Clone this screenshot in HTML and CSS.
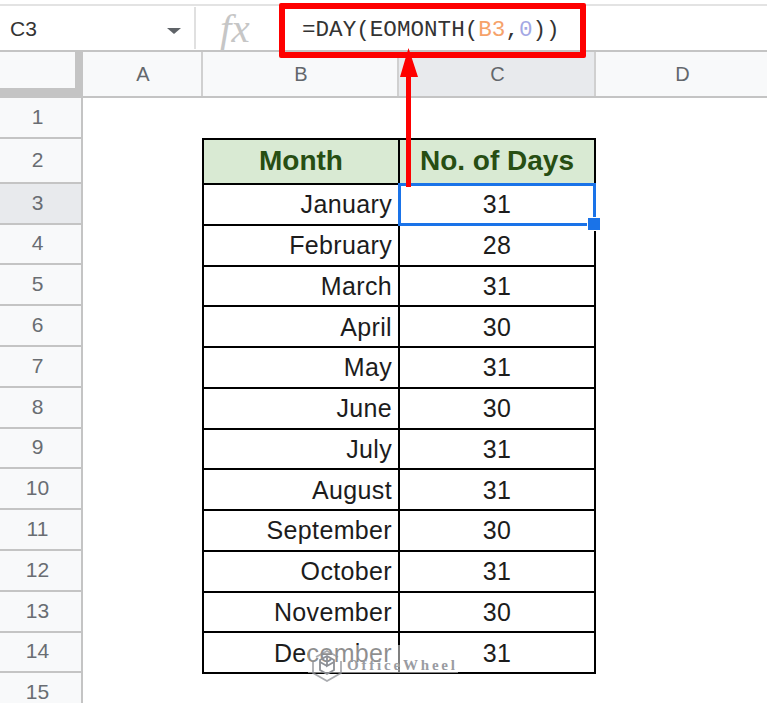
FILE: index.html
```html
<!DOCTYPE html>
<html lang="en">
<head>
<meta charset="utf-8">
<title>DAY EOMONTH</title>
<link rel="stylesheet" href="styles.css">
</head>
<body>
<div class="app">
  <div class="formula-bar">
    <div class="name-box"><span>C3</span><i class="caret"></i></div>
    <div class="fx">fx</div>
    <div class="formula">=DAY(EOMONTH(<span class="ref">B3</span>,<span class="num">0</span>))</div>
  </div>
  <div class="col-head">
    <div class="corner"></div>
    <div class="col a">A</div>
    <div class="col b">B</div>
    <div class="col c on">C</div>
    <div class="col d">D</div>
  </div>
  <div class="body">
    <div class="rows">
      <div class="rn">1</div><div class="rn r2">2</div><div class="rn on">3</div><div class="rn">4</div><div class="rn">5</div><div class="rn">6</div><div class="rn">7</div><div class="rn">8</div><div class="rn">9</div><div class="rn">10</div><div class="rn">11</div><div class="rn">12</div><div class="rn">13</div><div class="rn">14</div><div class="rn">15</div>
    </div>
    <div class="canvas">
      <table class="data">
        <tr class="hd"><th>Month</th><th>No. of Days</th></tr>
        <tr><td class="m">January</td><td class="d sel">31<i class="handle"></i></td></tr>
        <tr><td class="m">February</td><td class="d">28</td></tr>
        <tr><td class="m">March</td><td class="d">31</td></tr>
        <tr><td class="m">April</td><td class="d">30</td></tr>
        <tr><td class="m">May</td><td class="d">31</td></tr>
        <tr><td class="m">June</td><td class="d">30</td></tr>
        <tr><td class="m">July</td><td class="d">31</td></tr>
        <tr><td class="m">August</td><td class="d">31</td></tr>
        <tr><td class="m">September</td><td class="d">30</td></tr>
        <tr><td class="m">October</td><td class="d">31</td></tr>
        <tr><td class="m">November</td><td class="d">30</td></tr>
        <tr><td class="m">December</td><td class="d">31</td></tr>
      </table>
    </div>
  </div>
  <div class="red-box"></div>
  <svg class="arrow" width="20" height="142" viewBox="0 0 20 142"><path d="M8.5 0 L18 29 L11 29 L11 139 L6 139 L6 29 L0 29 Z" fill="#fe0000"/></svg>
  <div class="mark">
    <svg class="mark-logo" width="30" height="32" viewBox="0 0 30 32" fill="none" stroke="#8d9096" stroke-width="1.8"><path d="M4 7 L15 1 L26 7 M1 11 V23 L15 31 L29 23 V11" opacity=".75"/><path d="M15 6 L8 10 V20 L15 24 L22 20 V10 Z"/><path d="M15 6 V16 L22 12 M15 16 L8 12"/></svg>
    <span class="mark-text">OfficeWheel</span>
  </div>
</div>
</body>
</html>
```
FILE: styles.css
```css
* { box-sizing: border-box; }
html, body { margin: 0; padding: 0; background: #fff; }
body { width: 767px; height: 703px; overflow: hidden; font-family: "Liberation Sans", Arial, sans-serif; }
.app { position: relative; width: 767px; height: 703px; overflow: hidden; padding-top: 4px; }

.formula-bar { display: flex; align-items: center; height: 48px; border-top: 2px solid #e3e3e3; border-bottom: 2px solid #c4c4c4; background: #fff; }
.name-box { display: flex; align-items: center; justify-content: space-between; width: 196px; height: 42px; padding: 0 13px 0 10px; border-right: 2px solid #e0e0e0; font-size: 21px; color: #333; }
.name-box span { position: relative; top: 1px; }
.caret { width: 0; height: 0; border-left: 7px solid transparent; border-right: 7px solid transparent; border-top: 6px solid #5f6368; margin-top: 5px; }
.fx { width: 106px; padding-left: 24px; font-family: "Liberation Serif", serif; font-style: italic; font-size: 41px; line-height: 40px; color: #c6c6c6; }
.formula { font-family: "Liberation Mono", monospace; font-size: 22.6px; color: #333; padding-top: 3px; }
.ref { color: #f6a26a; }
.num { color: #a3a8e4; }

.col-head { display: flex; height: 46px; border-bottom: 2px solid #c4c4c4; background: #f8f9fa; }
.corner { width: 83px; height: 44px; border-right: 8px solid #c4c4c4; border-bottom: 8px solid #c4c4c4; background: #f8f9fa; }
.col { display: flex; align-items: center; justify-content: center; border-right: 2px solid #d0d0d0; font-size: 20px; color: #63676c; padding-left: 2px; }
.a { width: 120px; }
.b { width: 196px; }
.c { width: 197px; }
.d { width: 171px; border-right: 0; }
.on { background: #e8eaed; }

.body { display: flex; height: 605px; }
.rows { width: 83px; flex: none; background: #f8f9fa; border-right: 2px solid #c4c4c4; }
.rn { display: flex; align-items: center; justify-content: center; height: 40.8px; padding-right: 6px; padding-bottom: 1px; border-bottom: 2px solid #c4c4c4; font-size: 21px; color: #696d72; }
.rn.r2 { height: 45px; }
.rn.on { background: #e8eaed; }

.canvas { padding: 40px 0 0 119px; }
.data { border-collapse: collapse; table-layout: fixed; width: 393px; font-size: 25px; color: #1c1c1c; letter-spacing: .35px; }
.data th, .data td { border: 2px solid #000; padding: 0; width: 196px; }
.hd th { height: 45px; background: #d9ead3; color: #274e13; font-size: 28px; font-weight: bold; letter-spacing: 0; padding-bottom: 2px; }
.data td { height: 40.75px; padding-top: 1px; }
.m { text-align: right; padding-right: 6px !important; }
.d { text-align: center; position: relative; }
.sel { outline: 3px solid #1a73e8; outline-offset: -2px; }
.handle { position: absolute; right: -7px; bottom: -7px; width: 14px; height: 14px; background: #1a73e8; border: 1px solid #fff; }

.red-box { position: absolute; left: 279px; top: 3px; width: 307px; height: 55px; border: 6px solid #fe0000; border-radius: 2px; }
.arrow { position: absolute; left: 400px; top: 48px; }

.mark { position: absolute; left: 308px; top: 645px; display: flex; align-items: flex-start; gap: 5px; width: 150px; height: 28px; background: rgba(255,255,255,.5); padding-left: 4px; }
.mark-logo { flex: none; margin-top: 5px; }
.mark-text { font-family: "Liberation Serif", serif; font-weight: bold; font-size: 15px; line-height: 17px; margin-top: 12px; letter-spacing: 2.8px; color: #9a9ca2; white-space: nowrap; }
```
